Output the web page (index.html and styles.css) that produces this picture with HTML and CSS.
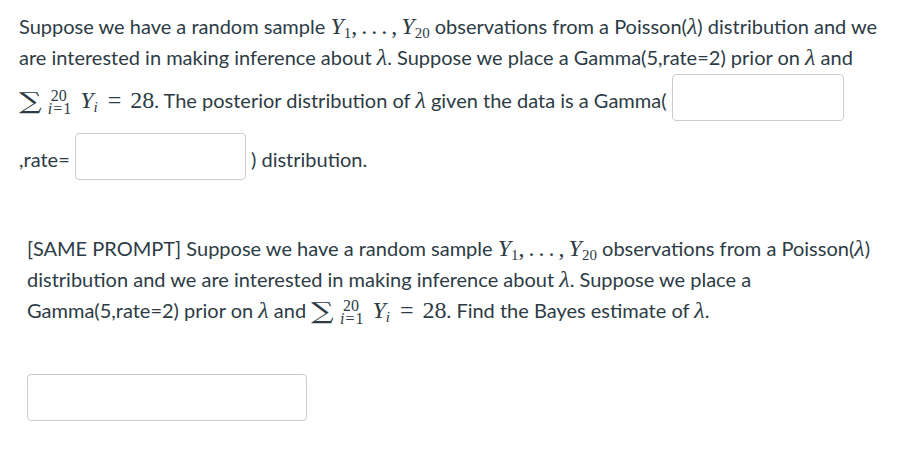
FILE: index.html
```html
<!DOCTYPE html>
<html>
<head>
<meta charset="utf-8">
<link rel="stylesheet" href="styles.css">
</head>
<body>
<div class="page">
  <div class="q q1">
    <p class="line">Suppose we have a random sample <span class="m"><i>Y</i><sub class="s">1</sub><span class="dots">, . . . , </span><i>Y</i><sub class="s">20</sub></span> observations from a Poisson(<span class="m"><i>λ</i></span>) distribution and we are interested in making inference about <span class="m"><i>λ</i></span>. Suppose we place a Gamma(5,rate=2) prior on <span class="m"><i>λ</i></span> and <span class="m"><span class="sum">∑</span><span class="lim"><span class="up">20</span><span class="dn"><i>i</i><span class="seq">=</span>1</span></span><i>Y</i><sub class="s"><i>i</i></sub><span class="eq">=</span>28</span>. The posterior distribution of <span class="m"><i>λ</i></span> given the data is a Gamma( <span class="field"><input class="box b1" type="text"></span><span class="nw">,rate= <span class="field"><input class="box b2" type="text"></span></span> ) distribution.</p>
  </div>
  <div class="q q2">
    <p class="line">[SAME PROMPT] Suppose we have a random sample <span class="m"><i>Y</i><sub class="s">1</sub><span class="dots">, . . . , </span><i>Y</i><sub class="s">20</sub></span> observations from a Poisson(<span class="m"><i>λ</i></span>) distribution and we are interested in making inference about <span class="m"><i>λ</i></span>. Suppose we place a Gamma(5,rate=2) prior on <span class="m"><i>λ</i></span> and <span class="m"><span class="sum">∑</span><span class="lim"><span class="up">20</span><span class="dn"><i>i</i><span class="seq">=</span>1</span></span><i>Y</i><sub class="s"><i>i</i></sub><span class="eq">=</span>28</span>. Find the Bayes estimate of <span class="m"><i>λ</i></span>.</p>
    <div class="ans"><input class="box b3" type="text"></div>
  </div>
</div>
</body>
</html>
```
FILE: styles.css
```css
html, body { margin: 0; padding: 0; background: #fff; }
body {
  font-family: Lato, "Noto Sans", sans-serif;
  font-size: 20px;
  color: #2d3b45;
}
.page { padding-top: 11px; }
.q1 { padding: 0 15px 0 19px; }
.q2 { padding: 43px 15px 0 27px; }
.line { margin: 0; line-height: 30.5px; }
.q2 .line { line-height: 31.2px; }
.m { font-family: "Liberation Serif", "DejaVu Serif", serif; font-size: 24px; line-height: 0; white-space: nowrap; color: #2d3b45; }
.m i { font-style: italic; }
.dots { letter-spacing: -1px; }
.s { font-size: 15px; vertical-align: -4px; line-height: 0; font-style: normal; }
.sum { font-family: "DejaVu Serif", serif; font-size: 22px; line-height: 0; display: inline-block; transform: scale(1.45, 1.05); transform-origin: left center; margin: 0 15px 0 0; vertical-align: -1px; }
.lim { display: inline-flex; flex-direction: column; font-size: 16px; line-height: 13px; vertical-align: 7px; margin-right: 9px; }
.up { margin-left: 1px; }
.dn { margin-left: -2px; }
.seq { margin: 0 1px; }
.eq { margin: 0 9px 0 10px; }
.nw { white-space: nowrap; }
.field {
  display: inline-block;
  overflow: hidden;
  margin: 2px 0 10px;
  vertical-align: -23px;
}
.box {
  display: block;
  box-sizing: border-box;
  border: 1px solid #c7cdd1;
  border-radius: 4px;
  background: #fff;
  font: inherit;
  padding: 0 8px;
  margin: 0;
  outline: none;
}
.b1 { width: 172px; height: 47px; }
.b2 { width: 171px; height: 47px; }
.ans { padding-top: 47px; }
.b3 { width: 280px; height: 47px; }
```
